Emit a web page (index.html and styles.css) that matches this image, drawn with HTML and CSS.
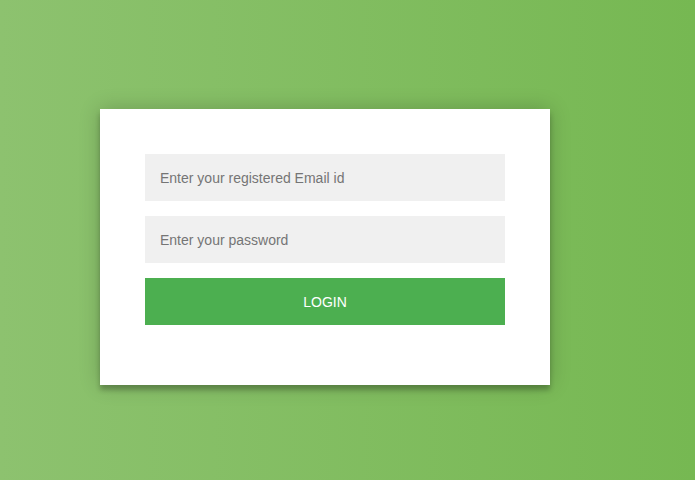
FILE: index.html
```html
<!DOCTYPE html>
<html>
<head>
<meta charset="utf-8">
<link rel="stylesheet" href="styles.css">
</head>
<body>
<div class="page">
  <form class="card">
    <input class="field" type="text" placeholder="Enter your registered Email id">
    <input class="field" type="password" placeholder="Enter your password">
    <button class="btn" type="button">LOGIN</button>
    <p class="message"></p>
  </form>
</div>
</body>
</html>
```
FILE: styles.css
```css
html, body {
  margin: 0;
  padding: 0;
  height: 100%;
}
body {
  background: linear-gradient(to right, #8dc26f, #76b852);
  font-family: "Liberation Sans", Arial, sans-serif;
}
.page {
  padding: 109px 0 0 100px;
}
.card {
  box-sizing: border-box;
  width: 450px;
  height: 276px;
  background: #fff;
  padding: 45px;
  display: flex;
  flex-direction: column;
  gap: 15px;
  box-shadow: 0 0 20px rgba(0,0,0,0.2), 0 5px 5px rgba(0,0,0,0.24);
}
.field {
  box-sizing: border-box;
  width: 360px;
  height: 47px;
  margin: 0;
  border: 0;
  outline: 0;
  background: #f0f0f0;
  padding: 0 15px;
  font-family: "Liberation Sans", Arial, sans-serif;
  font-size: 14px;
  color: #333;
}
.field::placeholder {
  color: #757575;
}
.btn {
  box-sizing: border-box;
  width: 360px;
  height: 47px;
  margin: 0;
  border: 0;
  background: #4caf50;
  color: #fff;
  font-family: "Liberation Sans", Arial, sans-serif;
  font-size: 14px;
  text-transform: uppercase;
  cursor: pointer;
}
.message {
  margin: 0;
}
```
